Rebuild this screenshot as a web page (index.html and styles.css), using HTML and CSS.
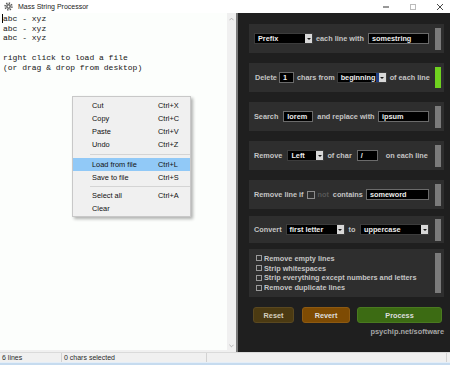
FILE: index.html
```html
<!DOCTYPE html>
<html>
<head>
<meta charset="utf-8">
<title>Mass String Processor</title>
<link rel="stylesheet" href="styles.css">
</head>
<body>
<div class="window">
  <div class="titlebar">
    <svg class="appicon" viewBox="0 0 12 12">
      <circle cx="6" cy="6" r="3.6" fill="none" stroke="#555" stroke-width="2" stroke-dasharray="1.4 1.4"/>
      <circle cx="6" cy="6" r="2.6" fill="#6a6a6a"/>
      <circle cx="6" cy="6" r="1" fill="#fff"/>
    </svg>
    <span class="title">Mass String Processor</span>
    <div class="controls">
      <svg viewBox="0 0 6 6"><line x1="0" y1="3" x2="6" y2="3" stroke="#333" stroke-width="1"/></svg>
      <svg viewBox="0 0 6 6"><rect x="0.5" y="0.5" width="5" height="5" fill="none" stroke="#bbb" stroke-width="1"/></svg>
      <svg viewBox="0 0 6 6"><path d="M0 0L6 6M6 0L0 6" stroke="#333" stroke-width="0.9"/></svg>
    </div>
  </div>

  <div class="main">
    <div class="editor">
      <div class="text"><span class="caret"></span>abc - xyz
abc - xyz
abc - xyz

right click to load a file
(or drag &amp; drop from desktop)</div>
      <div class="vscroll">
        <svg viewBox="0 0 6 4"><path d="M0.5 3.5L3 1L5.5 3.5" fill="none" stroke="#a8a8a8" stroke-width="1"/></svg>
        <svg viewBox="0 0 6 4"><path d="M0.5 0.5L3 3L5.5 0.5" fill="none" stroke="#a8a8a8" stroke-width="1"/></svg>
      </div>
    </div>

    <div class="panel">
      <div class="card c1">
        <div class="sel w59"><span class="v">Prefix</span><span class="btn"></span></div>
        <span class="lbl ml3">each line with</span>
        <div class="inp w61 push">somestring</div>
        <span class="ind"></span>
      </div>

      <div class="card c2">
        <span class="lbl ml1">Delete</span>
        <div class="inp w15 ml2">1</div>
        <span class="lbl ml3">chars from</span>
        <div class="sel w50 ml2"><span class="v">beginning</span><span class="focus"></span><span class="btn"></span></div>
        <span class="lbl ml3">of each line</span>
        <span class="ind on"></span>
      </div>

      <div class="card c3">
        <span class="lbl">Search</span>
        <div class="inp w30 ml5">lorem</div>
        <span class="lbl ml4">and replace with</span>
        <div class="inp w51 push">ipsum</div>
        <span class="ind"></span>
      </div>

      <div class="card c4">
        <span class="lbl">Remove</span>
        <div class="sel w37 ml5"><span class="v">Left</span><span class="btn"></span></div>
        <span class="lbl ml3">of char</span>
        <div class="inp w21 ml5">/</div>
        <span class="lbl ml8">on each line</span>
        <span class="ind"></span>
      </div>

      <div class="card c5">
        <span class="lbl">Remove line if</span>
        <span class="chk ml4"></span>
        <span class="lbl dim ml2">not</span>
        <span class="lbl ml4">contains</span>
        <div class="inp w63 push">someword</div>
        <span class="ind"></span>
      </div>

      <div class="card c6">
        <span class="lbl">Convert</span>
        <div class="sel w59 ml4"><span class="v">first letter</span><span class="btn"></span></div>
        <span class="lbl ml4">to</span>
        <div class="sel w69 push"><span class="v">uppercase</span><span class="btn"></span></div>
        <span class="ind"></span>
      </div>

      <div class="card c7">
        <div class="opts">
          <div class="opt"><span class="box"></span>Remove empty lines</div>
          <div class="opt"><span class="box"></span>Strip whitespaces</div>
          <div class="opt"><span class="box"></span>Strip everything except numbers and letters</div>
          <div class="opt"><span class="box"></span>Remove duplicate lines</div>
        </div>
        <span class="ind tall"></span>
      </div>

      <div class="actions">
        <div class="button reset">Reset</div>
        <div class="button revert">Revert</div>
        <div class="button process">Process</div>
      </div>
      <div class="credit">psychip.net/software</div>
    </div>
  </div>

  <div class="statusbar">
    <div class="sec s1">6 lines</div>
    <div class="sec s2">0 chars selected</div>
    <div class="sec s3"></div>
  </div>
  <div class="taskedge"></div>

  <div class="menu">
    <div class="item"><span>Cut</span><span>Ctrl+X</span></div>
    <div class="item"><span>Copy</span><span>Ctrl+C</span></div>
    <div class="item"><span>Paste</span><span>Ctrl+V</span></div>
    <div class="item"><span>Undo</span><span>Ctrl+Z</span></div>
    <div class="sep"></div>
    <div class="item hl"><span>Load from file</span><span>Ctrl+L</span></div>
    <div class="item"><span>Save to file</span><span>Ctrl+S</span></div>
    <div class="sep s2"></div>
    <div class="item"><span>Select all</span><span>Ctrl+A</span></div>
    <div class="item"><span>Clear</span><span></span></div>
  </div>
</div>
</body>
</html>
```

FILE: styles.css
```css
* { box-sizing: border-box; }
html, body { margin: 0; padding: 0; }
body {
  width: 450px;
  height: 365px;
  overflow: hidden;
  background: #ffffff;
  font-family: "Liberation Sans", Arial, sans-serif;
}
.window {
  position: relative;
  width: 450px;
  height: 365px;
  display: flex;
  flex-direction: column;
}

/* title bar */
.titlebar {
  height: 13px;
  display: flex;
  align-items: center;
  background: #ffffff;
  padding-left: 3px;
}
.appicon { width: 11px; height: 11px; margin-right: 4px; display: block; }
.title { font-size: 7px; color: #1a1a1a; line-height: 13px; }
.controls {
  margin-left: auto;
  display: flex;
  align-items: center;
  gap: 21px;
  padding-right: 7px;
}
.controls svg { width: 6px; height: 6px; display: block; }

/* main area */
.main { display: flex; height: 339px; }
.editor {
  width: 236px;
  height: 339px;
  display: flex;
  align-items: flex-start;
  background: #f0f0f0;
}
.text {
  width: 227px;
  height: 337px;
  background: #fcfefc;
  font-family: "Liberation Mono", "Courier New", monospace;
  font-size: 8px;
  line-height: 9.7px;
  white-space: pre;
  padding: 1px 0 0 3px;
  color: #151515;
}
.caret {
  display: inline-block;
  width: 0;
  height: 9px;
  border-left: 1px solid #000;
  margin-left: -1px;
  vertical-align: -2px;
}
.vscroll {
  width: 9px;
  height: 337px;
  display: flex;
  flex-direction: column;
  justify-content: space-between;
  align-items: center;
  padding: 4px 0 2px;
  background: #f0f0f0;
}
.vscroll svg { width: 5px; height: 4px; display: block; }

/* right panel */
.panel {
  flex: 1;
  height: 339px;
  border-left: 2px solid #7a7a7a;
  background: #1f1f1f;
  padding: 11px 0 0 11px;
}
.card {
  width: 195px;
  height: 29px;
  background: #2e2e2e;
  display: flex;
  align-items: center;
  padding: 0 3px 0 5px;
}
.card.c2, .card.c3, .card.c4, .card.c5 { margin-top: 10px; }
.card.c6 { margin-top: 7px; height: 27px; }
.card.c7 { margin-top: 6px; height: 48px; padding-left: 7px; }

.lbl {
  font-size: 7.3px;
  font-weight: bold;
  color: #c4c4c4;
  white-space: nowrap;
  line-height: 9px;
}
.lbl.dim { color: #575757; }

.ml1 { margin-left: 1px; }
.ml2 { margin-left: 2px; }
.ml3 { margin-left: 3px; }
.ml4 { margin-left: 4px; }
.ml5 { margin-left: 5px; }
.ml8 { margin-left: 8px; }
.push { margin-left: auto; }

.w15 { width: 15px; }
.w21 { width: 21px; }
.w30 { width: 30px; }
.w37 { width: 37px; }
.w50 { width: 50px; }
.w51 { width: 51px; }
.w59 { width: 59px; }
.w61 { width: 61px; }
.w63 { width: 63px; }
.w69 { width: 69px; }

.inp {
  height: 11px;
  background: #000000;
  border: 1px solid #6b6b6b;
  color: #ececec;
  font-size: 7.3px;
  font-weight: bold;
  line-height: 9px;
  padding-left: 3px;
  white-space: nowrap;
  overflow: hidden;
  flex: none;
}
.sel {
  height: 11px;
  display: flex;
  background: #000000;
  border: 1px solid #3c3c3c;
  flex: none;
}
.sel .v {
  flex: 1;
  color: #ececec;
  font-size: 7.3px;
  font-weight: bold;
  line-height: 9px;
  padding-left: 3px;
  white-space: nowrap;
  overflow: hidden;
}
.sel .focus { width: 3px; background: #1d3f86; }
.sel .btn {
  width: 7px;
  background: #d8d8d8;
  display: flex;
  align-items: center;
  justify-content: center;
}
.sel .btn::after {
  content: "";
  border-left: 2px solid transparent;
  border-right: 2px solid transparent;
  border-top: 2px solid #1a1a1a;
}
.chk {
  width: 8px;
  height: 8px;
  border: 1px solid #8c8c8c;
  flex: none;
}
.ind {
  width: 6px;
  height: 22px;
  background: #7b7b7b;
  margin-left: 6px;
  flex: none;
}
.card.c2 .ind, .card.c4 .ind { margin-left: auto; }
.ind.on { background: #6fd21f; height: 21px; }
.ind.tall { height: 40px; margin-left: auto; }

.opts { display: flex; flex-direction: column; }
.opt {
  display: flex;
  align-items: center;
  height: 9.75px;
  font-size: 7.3px;
  font-weight: bold;
  color: #c4c4c4;
  white-space: nowrap;
}
.opt .box {
  width: 6px;
  height: 6px;
  border: 1px solid #9a9a9a;
  margin-right: 2px;
  flex: none;
}

.actions {
  display: flex;
  margin-top: 10px;
  padding-left: 4px;
}
.button {
  height: 16px;
  border-radius: 3px;
  font-size: 7.3px;
  font-weight: bold;
  color: #dedede;
  display: flex;
  align-items: center;
  justify-content: center;
}
.button.reset { width: 41px; background: #4b3a12; border: 1px solid #5a4820; color: #d6cfbf; }
.button.revert { width: 48px; margin-left: 8px; background: #7e4b03; border: 1px solid #8d5a12; }
.button.process { width: 85px; margin-left: 7px; background: #3c6b13; border: 1px solid #4a7a20; }
.credit {
  width: 195px;
  text-align: right;
  font-size: 7.4px;
  font-weight: bold;
  color: #a6a6a6;
  margin-top: 4px;
  line-height: 9px;
}

/* status bar */
.statusbar {
  height: 10px;
  display: flex;
  background: #f0f0f0;
  border-top: 1px solid #dadada;
}
.sec {
  font-size: 7px;
  color: #2a2a2a;
  line-height: 9px;
  white-space: nowrap;
  border-right: 1px solid #d2d2d2;
}
.sec.s1 { width: 62px; padding-left: 2px; }
.sec.s2 { width: 145px; padding-left: 2px; }
.sec.s3 { width: 240px; }
.taskedge {
  height: 3px;
  background: #c6dbef;
  border-top: 1px solid #e4eef8;
}

/* context menu */
.menu {
  position: absolute;
  left: 72px;
  top: 96px;
  width: 119px;
  background: #f0f0f0;
  border: 1px solid #c8c8c8;
  box-shadow: 2px 2px 3px rgba(0, 0, 0, 0.3);
  padding: 2px 0 1px;
}
.item {
  height: 13px;
  display: grid;
  grid-template-columns: 66px auto;
  align-items: center;
  padding-left: 19px;
  font-size: 7.4px;
  color: #111;
  white-space: nowrap;
}
.item.hl { background: #91c9f7; }
.sep {
  height: 7px;
  display: flex;
  align-items: center;
  padding-left: 17px;
}
.sep.s2 { height: 5px; }
.sep::after {
  content: "";
  flex: 1;
  height: 1px;
  background: #d4d4d4;
}
```
